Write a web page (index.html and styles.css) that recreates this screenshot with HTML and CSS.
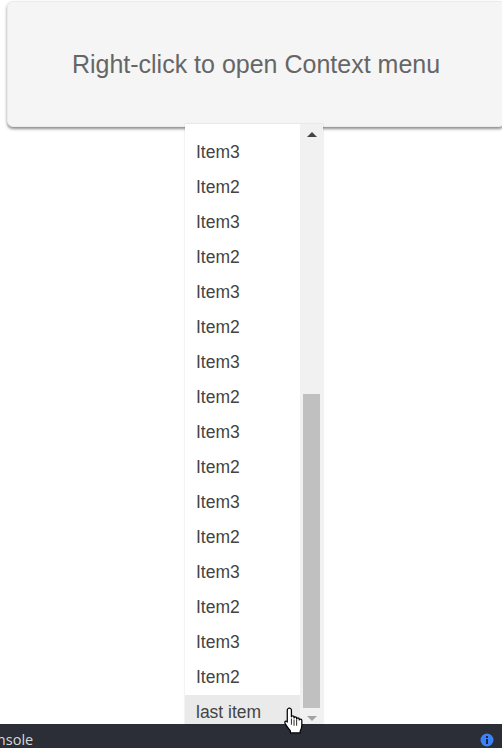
FILE: index.html
```html
<!DOCTYPE html>
<html lang="en">

<head>
    <meta name="viewport" content="width=device-width, initial-scale=1">
    <link rel="stylesheet" href="styles.css">
</head>

<body>

    <!-- Main content section -->
    <div class="page">
        <div class="context-box">Right-click to open Context menu</div>
    </div>

    <!-- Open context menu, scrolled to the end -->
    <div class="menu">
        <ul class="menu-list">
            <li>Item3</li>
            <li>Item2</li>
            <li>Item3</li>
            <li>Item2</li>
            <li>Item3</li>
            <li>Item2</li>
            <li>Item3</li>
            <li>Item2</li>
            <li>Item3</li>
            <li>Item2</li>
            <li>Item3</li>
            <li>Item2</li>
            <li>Item3</li>
            <li>Item2</li>
            <li>Item3</li>
            <li>Item2</li>
            <li class="hovered">last item</li>
        </ul>
        <div class="scrollbar">
            <span class="arrow-up"></span>
            <div class="thumb"></div>
            <span class="arrow-down"></span>
        </div>
    </div>

    <!-- Hand cursor over the last item -->
    <svg class="cursor" width="19" height="27" viewBox="0 0 18 26">
        <path d="M5 1.200C6.200 1.200 7 2 7 3.200V9.500C7 8.200 9.500 8.200 9.500 9.500V10.500C9.500 9.200 12 9.200 12 10.500V11.500C12 10.200 14.500 10.200 14.500 11.500V12.500C14.500 11.500 17 11.500 17 12.800V18C17 20.500 16 22 15.500 23V25H6V23C4.500 21 2.500 19 1 16C.3 14.500 .8 13.500 1.800 13.500C2.500 13.500 3 14 3 14.500V3.200C3 2 3.800 1.200 5 1.200Z" fill="#fff" stroke="#000" stroke-width="1.200" stroke-linejoin="round"/>
        <path d="M7 11v6M9.500 12v6M12 12v6" stroke="#333" stroke-width="1" fill="none"/>
    </svg>

    <!-- Bottom status bar -->
    <div class="status-bar">
        <span class="console-label">Console</span>
        <span class="status-right">
            <svg width="14" height="14" viewBox="0 0 14 14">
                <circle cx="7" cy="7" r="6.500" fill="#3b82f6"/>
                <rect x="6" y="6" width="2" height="5" fill="#1f2937"/>
                <rect x="6" y="3" width="2" height="2" fill="#1f2937"/>
            </svg>
            <span class="status-count">1</span>
        </span>
    </div>

</body>

</html>
```

FILE: styles.css
```css
body {
    font-family: "Liberation Sans", Arial, Helvetica, sans-serif;
    margin: 0;
    height: 748px;
    overflow: hidden;
    display: flex;
    flex-direction: column;
    background-color: #fff;
}

* {
    box-sizing: border-box;
}

/* Takes the space above the status bar */
.page {
    flex: 1;
    padding: 1px 0 0 7px;
    overflow: hidden;
}

.context-box {
    width: 498px;
    height: 126px;
    display: flex;
    align-items: center;
    justify-content: center;
    font-size: 25px;
    color: #666;
    background-color: #f5f5f5;
    border: 1px solid #ebebeb;
    border-radius: 6px;
    box-shadow: 0 2px 3px rgba(0, 0, 0, 0.45);
}

/* The popup menu */
.menu {
    position: absolute;
    left: 185px;
    top: 124px;
    width: 138px;
    height: 600px;
    display: flex;
    overflow: hidden;
    background-color: #fff;
    box-shadow: 0 0 2px rgba(0, 0, 0, 0.15);
}

.menu-list {
    list-style: none;
    margin: 0;
    padding: 11px 0 0 0;
    width: 115px;
    font-size: 17.5px;
    color: #444;
}

.menu-list li {
    height: 35px;
    line-height: 35px;
    padding-left: 11px;
}

.menu-list .hovered {
    background-color: #eaeaea;
}

/* Scrollbar at the end of its range */
.scrollbar {
    width: 23px;
    display: flex;
    flex-direction: column;
    align-items: center;
    background-color: #f1f1f1;
    padding: 8px 3px 3px 3px;
}

.arrow-up {
    width: 0;
    height: 0;
    border-left: 5px solid transparent;
    border-right: 5px solid transparent;
    border-bottom: 5px solid #444;
}

.thumb {
    width: 17px;
    height: 314px;
    margin-top: auto;
    background-color: #c0c0c0;
}

.arrow-down {
    width: 0;
    height: 0;
    margin-top: 8px;
    border-left: 5px solid transparent;
    border-right: 5px solid transparent;
    border-top: 5px solid #a3a3a3;
}

.cursor {
    position: absolute;
    left: 284px;
    top: 707px;
    z-index: 5;
}

/* Bottom status bar, cut off by the window */
.status-bar {
    height: 24px;
    flex-shrink: 0;
    display: flex;
    justify-content: space-between;
    align-items: flex-end;
    overflow: hidden;
    background-color: #2b2e36;
    color: #d8d8d8;
    font-family: "Open Sans", sans-serif;
    font-size: 14.5px;
}

.console-label {
    margin-left: -21px;
    line-height: 19px;
    margin-bottom: -1px;
}

.status-right {
    display: flex;
    align-items: center;
    gap: 7px;
    margin-right: -6px;
    margin-bottom: 1px;
}

.status-count {
    line-height: 14px;
    font-size: 12px;
}
```
